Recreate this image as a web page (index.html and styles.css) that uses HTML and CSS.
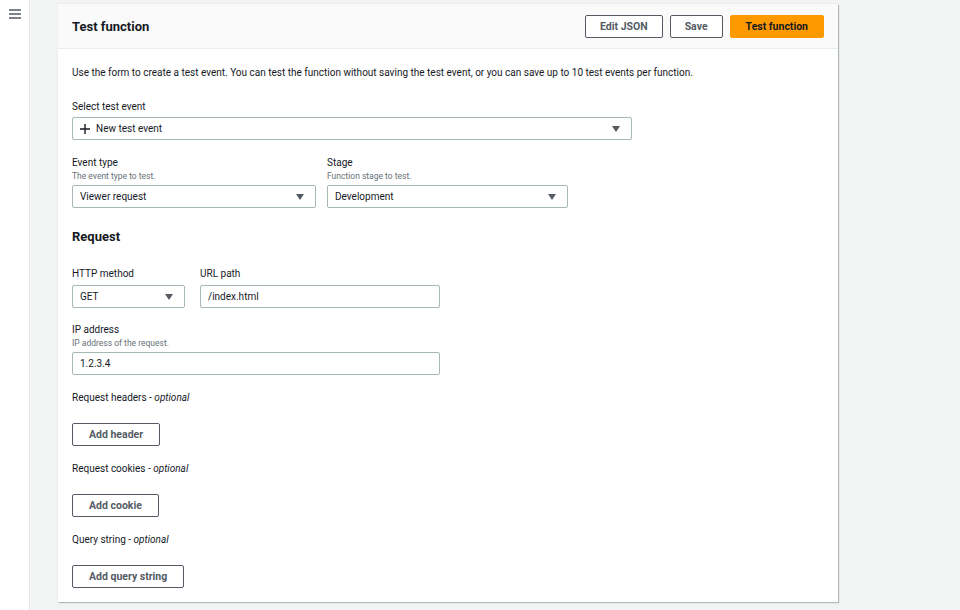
FILE: index.html
```html
<!DOCTYPE html>
<html lang="en">
<head>
  <meta charset="UTF-8">
  <title>Test function</title>
  <link rel="stylesheet" href="styles.css">
</head>
<body>
  <nav class="sidebar">
    <svg class="menu-icon" width="12" height="10" viewBox="0 0 12 10">
      <path d="M0 1h12M0 5h12M0 9h12" stroke="#545b64" stroke-width="1.4"/>
    </svg>
  </nav>

  <main class="content">
    <section class="card">
      <header class="card-header">
        <h2>Test function</h2>
        <div class="actions">
          <button class="btn">Edit JSON</button>
          <button class="btn">Save</button>
          <button class="btn primary">Test function</button>
        </div>
      </header>

      <div class="card-body">
        <p class="intro">Use the form to create a test event. You can test the function without saving the test event, or you can save up to 10 test events per function.</p>

        <div class="field first">
          <label>Select test event</label>
          <div class="select wide">
            <span class="value">
              <svg width="10" height="10" viewBox="0 0 10 10"><path d="M5 0v10M0 5h10" stroke="#16191f" stroke-width="1.4"/></svg>
              New test event
            </span>
            <span class="caret"></span>
          </div>
        </div>

        <div class="row">
          <div class="field">
            <label>Event type</label>
            <div class="desc">The event type to test.</div>
            <div class="select event-type"><span class="value">Viewer request</span><span class="caret"></span></div>
          </div>
          <div class="field">
            <label>Stage</label>
            <div class="desc">Function stage to test.</div>
            <div class="select stage"><span class="value">Development</span><span class="caret"></span></div>
          </div>
        </div>

        <h3 class="section-title">Request</h3>

        <div class="row gap15">
          <div class="field tight">
            <label>HTTP method</label>
            <div class="select method"><span class="value">GET</span><span class="caret"></span></div>
          </div>
          <div class="field tight">
            <label>URL path</label>
            <div class="input url">/index.html</div>
          </div>
        </div>

        <div class="field">
          <label>IP address</label>
          <div class="desc">IP address of the request.</div>
          <div class="input ip">1.2.3.4</div>
        </div>

        <div class="field optional">
          <label>Request headers - <i>optional</i></label>
          <button class="btn add">Add header</button>
        </div>

        <div class="field optional">
          <label>Request cookies - <i>optional</i></label>
          <button class="btn add">Add cookie</button>
        </div>

        <div class="field optional">
          <label>Query string - <i>optional</i></label>
          <button class="btn add">Add query string</button>
        </div>
      </div>
    </section>
  </main>
</body>
</html>
```

FILE: styles.css
```css
* {
  box-sizing: border-box;
  margin: 0;
  padding: 0;
}

body {
  font-family: Roboto, 'Liberation Sans', sans-serif;
  font-size: 10px;
  color: #16191f;
  background-color: #f2f3f3;
  display: flex;
  height: 100vh;
  overflow: hidden;
}

.sidebar {
  width: 30px;
  flex-shrink: 0;
  background-color: #ffffff;
  border-right: 1px solid #e4e7e7;
  padding: 9px 0 0 9px;
}

.menu-icon {
  display: block;
}

.content {
  padding: 4px 0 0 28px;
}

.card {
  width: 780px;
  background-color: #ffffff;
  box-shadow: 1px 1px 1px 0 rgba(0, 28, 36, 0.25), 0 0 1px 0 rgba(0, 28, 36, 0.15);
}

.card-header {
  height: 45px;
  background-color: #fafafa;
  border-bottom: 1px solid #eaeded;
  display: flex;
  align-items: center;
  justify-content: space-between;
  padding: 0 14px;
}

.card-header h2 {
  font-size: 13px;
  font-weight: 700;
}

.actions {
  display: flex;
  gap: 7px;
}

.btn {
  font-family: inherit;
  font-size: 10.5px;
  font-weight: 700;
  color: #545b64;
  background-color: #ffffff;
  border: 1px solid #545b64;
  border-radius: 2px;
  height: 23px;
  padding: 0 16px;
  cursor: pointer;
}

.actions .btn {
  padding: 0 14px;
}

.btn.primary {
  background-color: #ff9900;
  border-color: #ff9900;
  color: #16191f;
  padding: 0 15px;
}

.card-body {
  padding: 17px 14px 14px;
}

.intro {
  line-height: 14px;
}

.field {
  display: flex;
  flex-direction: column;
  align-items: flex-start;
  margin-top: 15px;
}

.field.first {
  margin-top: 20px;
  margin-bottom: 1px;
}

.field.first label {
  margin-bottom: 3px;
}

.field.optional {
  margin-top: 16px;
}

.field label {
  line-height: 14px;
  margin-bottom: 4px;
}

.field .desc {
  font-size: 8.5px;
  color: #687078;
  line-height: 10px;
  margin-top: -3px;
  margin-bottom: 4px;
}

.field .btn.add {
  margin-top: 14px;
}

.row {
  display: flex;
  gap: 11px;
}

.row.gap15 {
  gap: 15px;
}

.field.tight {
  margin-top: 21px;
}

.select,
.input {
  height: 23px;
  border: 1px solid #aab7b8;
  border-radius: 2px;
  display: flex;
  align-items: center;
  justify-content: space-between;
  padding: 0 11px 0 7px;
}

.select .value {
  display: flex;
  align-items: center;
  gap: 6px;
}

.caret {
  width: 0;
  height: 0;
  border-left: 4px solid transparent;
  border-right: 4px solid transparent;
  border-top: 6px solid #545b64;
}

.select.wide { width: 560px; }
.select.event-type { width: 244px; }
.select.stage { width: 241px; }
.select.method { width: 113px; }
.input.url { width: 240px; }
.input.ip { width: 368px; }

.section-title {
  font-size: 13px;
  font-weight: 700;
  line-height: 18px;
  margin-top: 20px;
}
```
